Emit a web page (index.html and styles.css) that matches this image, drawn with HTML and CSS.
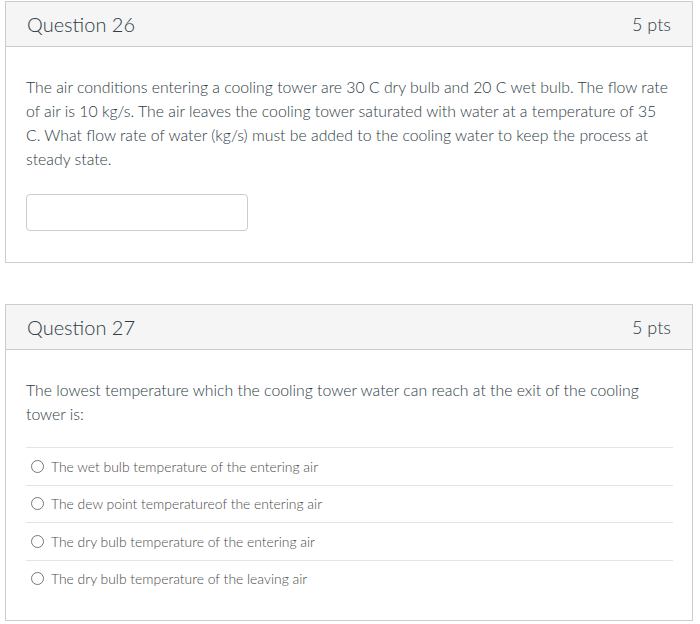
FILE: index.html
```html
<!DOCTYPE html>
<html>
<head>
<meta charset="utf-8">
<link rel="stylesheet" href="styles.css">
</head>
<body>
<div class="page">
  <div class="card">
    <div class="card-header">
      <span class="q-title">Question 26</span>
      <span class="q-pts">5 pts</span>
    </div>
    <div class="card-body">
      <p class="q-text">The air conditions entering a cooling tower are 30 C dry bulb and 20 C wet bulb. The flow rate of air is 10 kg/s. The air leaves the cooling tower saturated with water at a temperature of 35 C. What flow rate of water (kg/s) must be added to the cooling water to keep the process at steady state.</p>
      <div class="answer-input"></div>
    </div>
  </div>

  <div class="card card-two">
    <div class="card-header">
      <span class="q-title">Question 27</span>
      <span class="q-pts">5 pts</span>
    </div>
    <div class="card-body body-two">
      <p class="q-text">The lowest temperature which the cooling tower water can reach at the exit of the cooling tower is:</p>
      <div class="answers">
        <div class="answer"><span class="radio"></span><span>The wet bulb temperature of the entering air</span></div>
        <div class="answer"><span class="radio"></span><span>The dew point temperatureof the entering air</span></div>
        <div class="answer"><span class="radio"></span><span>The dry bulb temperature of the entering air</span></div>
        <div class="answer last"><span class="radio"></span><span>The dry bulb temperature of the leaving air</span></div>
      </div>
    </div>
  </div>
</div>
</body>
</html>
```
FILE: styles.css
```css
html, body {
  margin: 0;
  padding: 0;
  background: #ffffff;
}
body {
  font-family: Lato, "Liberation Sans", sans-serif;
  color: #2d3b45;
}
.page {
  padding: 1px 6px 0 5px;
}
.card {
  width: 688px;
  border: 1px solid #c7cdd1;
  box-sizing: border-box;
  background: #fff;
}
.card-two {
  margin-top: 41px;
}
.card-header {
  height: 45px;
  background: #f5f5f5;
  border-bottom: 1px solid #c7cdd1;
  box-sizing: border-box;
  display: flex;
  align-items: center;
  justify-content: space-between;
  padding: 0 21px 0 21px;
}
.q-title {
  font-size: 20px;
  font-weight: 300;
  color: #2d3b45;
}
.q-pts {
  font-size: 18px;
  font-weight: 300;
  color: #2d3b45;
}
.card-body {
  padding: 28px 19px 31px 20px;
}
.body-two {
  padding-top: 28px;
  padding-bottom: 23px;
}
.q-text {
  margin: 0;
  font-size: 15.8px;
  font-weight: 300;
  line-height: 24px;
  color: #2d3b45;
}
.answer-input {
  margin-top: 23px;
  width: 222px;
  height: 37px;
  border: 1px solid #c7cdd1;
  border-radius: 4px;
  box-sizing: border-box;
}
.answers {
  margin-top: 21px;
}
.answer {
  height: 37.5px;
  box-sizing: border-box;
  border-top: 1px solid #e2e4e6;
  display: flex;
  align-items: center;
  font-size: 13.9px;
  font-weight: 300;
  color: #4a4a4a;
}
.radio {
  width: 11px;
  height: 11px;
  border: 1.5px solid #777;
  border-radius: 50%;
  margin: 0 7px 0 5px;
  flex: none;
}
```
